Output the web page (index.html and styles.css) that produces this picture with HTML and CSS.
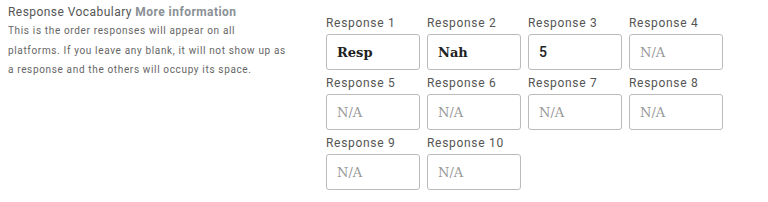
FILE: index.html
```html
<!DOCTYPE html>
<html lang="en">
<head>
    <meta charset="UTF-8">
    <title>Response Vocabulary</title>
    <link rel="stylesheet" href="styles.css">
</head>
<body>
    <div class="vocab-section">
        <div class="vocab-info">
            <div class="vocab-title">Response Vocabulary <a class="more-info" href="#">More information</a></div>
            <p class="vocab-desc">This is the order responses will appear on all<br>platforms. If you leave any blank, it will not show up as<br>a response and the others will occupy its space.</p>
        </div>
        <div class="vocab-grid">
            <div class="field"><label>Response 1</label><input class="value-serif" type="text" value="Resp"></div>
            <div class="field"><label>Response 2</label><input class="value-serif" type="text" value="Nah"></div>
            <div class="field"><label>Response 3</label><input class="value-sans" type="text" value="5"></div>
            <div class="field"><label>Response 4</label><input type="text" placeholder="N/A"></div>
            <div class="field"><label>Response 5</label><input type="text" placeholder="N/A"></div>
            <div class="field"><label>Response 6</label><input type="text" placeholder="N/A"></div>
            <div class="field"><label>Response 7</label><input type="text" placeholder="N/A"></div>
            <div class="field"><label>Response 8</label><input type="text" placeholder="N/A"></div>
            <div class="field"><label>Response 9</label><input type="text" placeholder="N/A"></div>
            <div class="field"><label>Response 10</label><input type="text" placeholder="N/A"></div>
        </div>
    </div>
</body>
</html>
```

FILE: styles.css
```css
body {
    margin: 0;
    background-color: #fff;
    font-family: "Roboto", "Liberation Sans", sans-serif;
    color: #555;
}
.vocab-section {
    display: flex;
    padding: 4px 8px 0 8px;
}
.vocab-info {
    width: 300px;
    flex: none;
}
.vocab-title {
    font-size: 12px;
    line-height: 16px;
    letter-spacing: 0.45px;
    color: #555;
}
.more-info {
    color: #8a9096;
    font-weight: bold;
    text-decoration: none;
}
.vocab-desc {
    margin: 1px 0 0 0;
    font-size: 10px;
    line-height: 19.5px;
    letter-spacing: 0.65px;
    color: #666;
    white-space: nowrap;
}
.vocab-grid {
    display: grid;
    grid-template-columns: repeat(4, 94px);
    column-gap: 7px;
    row-gap: 6px;
    margin-left: 18px;
    margin-top: 12px;
}
.field label {
    display: block;
    font-size: 12px;
    line-height: 14px;
    letter-spacing: 0.7px;
    margin-bottom: 4px;
    color: #555;
}
.field input {
    box-sizing: border-box;
    width: 94px;
    height: 36px;
    border: 1px solid #bbb;
    border-radius: 3px;
    padding: 0 10px;
    font-family: "DejaVu Serif", serif;
    font-size: 13px;
    color: #222;
    outline: none;
}
.field input::placeholder {
    color: #999;
}
.value-serif {
    font-weight: bold;
}
.field input.value-sans {
    font-family: "Roboto", "Liberation Sans", sans-serif;
    font-size: 14px;
    font-weight: 500;
}
```
